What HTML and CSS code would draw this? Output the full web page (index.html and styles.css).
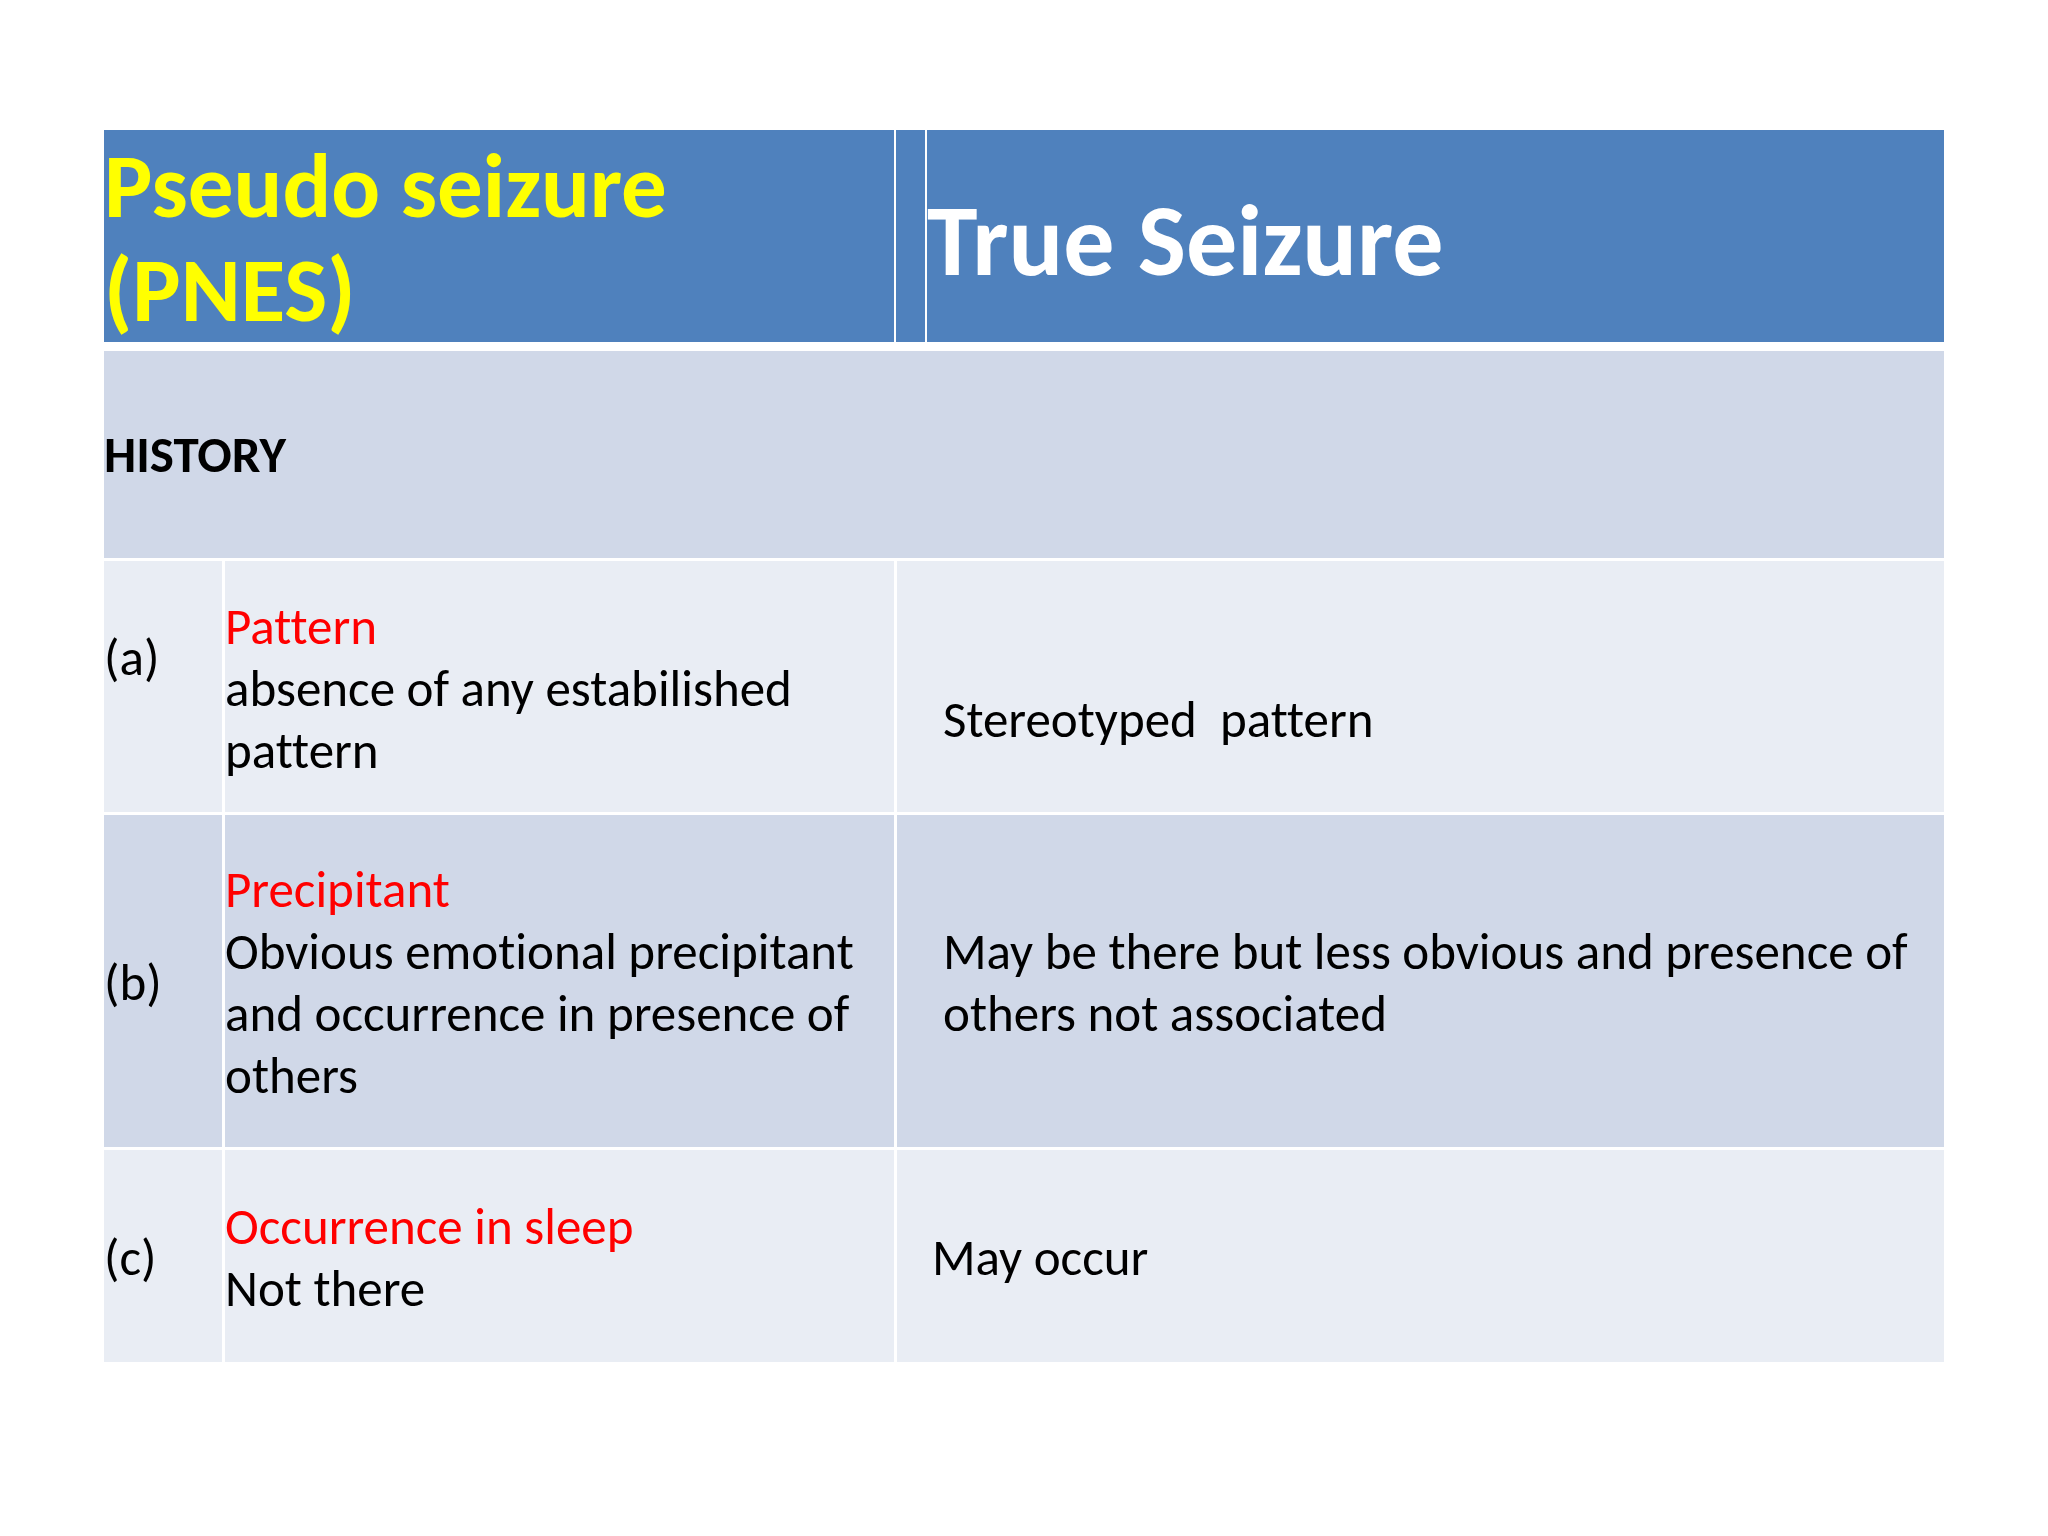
FILE: index.html
```html
<!DOCTYPE html>
<html lang="en">
<head>
<meta charset="utf-8">
<title>Pseudo seizure vs True Seizure</title>
<link rel="stylesheet" href="styles.css">
</head>
<body>
<div class="slide">
  <div class="table">
    <div class="head-row">
      <div class="head-cell head-left"><div class="text">Pseudo seizure<br>(PNES)</div></div>
      <div class="head-cell head-narrow"></div>
      <div class="head-cell head-right"><div class="text">True Seizure</div></div>
    </div>
    <div class="section-row dark">
      <div class="section-title">HISTORY</div>
    </div>
    <div class="body-row light row-a">
      <div class="cell label"><div class="text">(a)<br>&nbsp;</div></div>
      <div class="cell"><div class="text"><span class="red">Pattern</span><br>absence of any estabilished<br>pattern</div></div>
      <div class="cell right"><div class="text">&nbsp;<br>Stereotyped&nbsp; pattern</div></div>
    </div>
    <div class="body-row dark row-b">
      <div class="cell label"><div class="text">(b)</div></div>
      <div class="cell"><div class="text"><span class="red">Precipitant</span><br>Obvious emotional precipitant<br>and occurrence in presence of<br>others</div></div>
      <div class="cell right"><div class="text">May be there but less obvious and presence of<br>others not associated</div></div>
    </div>
    <div class="body-row light row-c">
      <div class="cell label"><div class="text">(c)</div></div>
      <div class="cell"><div class="text"><span class="red">Occurrence in sleep</span><br>Not there</div></div>
      <div class="cell right right-c"><div class="text">May occur</div></div>
    </div>
  </div>
</div>
</body>
</html>
```

FILE: styles.css
```css
html, body {
  margin: 0;
  padding: 0;
  background: #ffffff;
}

.slide {
  width: 2048px;
  height: 1536px;
  box-sizing: border-box;
  padding: 130px 104px 0 104px;
  font-family: "Carlito", "Open Sans", "Liberation Sans", sans-serif;
  font-variant-ligatures: none;
}

.table {
  width: 1840px;
  display: flex;
  flex-direction: column;
  gap: 3px;
}

.head-row {
  display: flex;
  gap: 2px;
  height: 212px;
  margin-bottom: 6px;
}

.head-cell {
  background: #4f81bd;
  display: flex;
  align-items: center;
  font-weight: 700;
  white-space: nowrap;
}

.head-left {
  width: 790px;
  color: #ffff00;
  font-size: 91px;
  line-height: 104px;
}

.head-narrow {
  width: 29px;
}

.head-right {
  flex: 1;
  color: #ffffff;
  font-size: 102px;
  line-height: 124px;
}

.head-left .text {
  padding-top: 4px;
}

.head-right .text {
  padding-top: 8px;
}

.dark {
  background: #d0d8e8;
}

.light {
  background: #e9edf4;
}

.section-row {
  height: 207px;
  display: flex;
  align-items: center;
}

.section-title {
  font-size: 51px;
  font-weight: 700;
  line-height: 62px;
  color: #000000;
}

.body-row {
  display: grid;
  grid-template-columns: 118px 669px 1fr;
  gap: 3px;
  background: #ffffff;
}

.row-a { height: 251px; }
.row-b { height: 332px; }
.row-c { height: 212px; }

.cell {
  display: flex;
  align-items: center;
  font-size: 51px;
  line-height: 62px;
  color: #000000;
  white-space: nowrap;
}

.cell .text {
  padding-top: 4px;
}

.light .cell { background: #e9edf4; }
.dark .cell { background: #d0d8e8; }

.right {
  padding-left: 46px;
}

.right-c {
  padding-left: 35px;
}

.red {
  color: #ff0000;
}
```
